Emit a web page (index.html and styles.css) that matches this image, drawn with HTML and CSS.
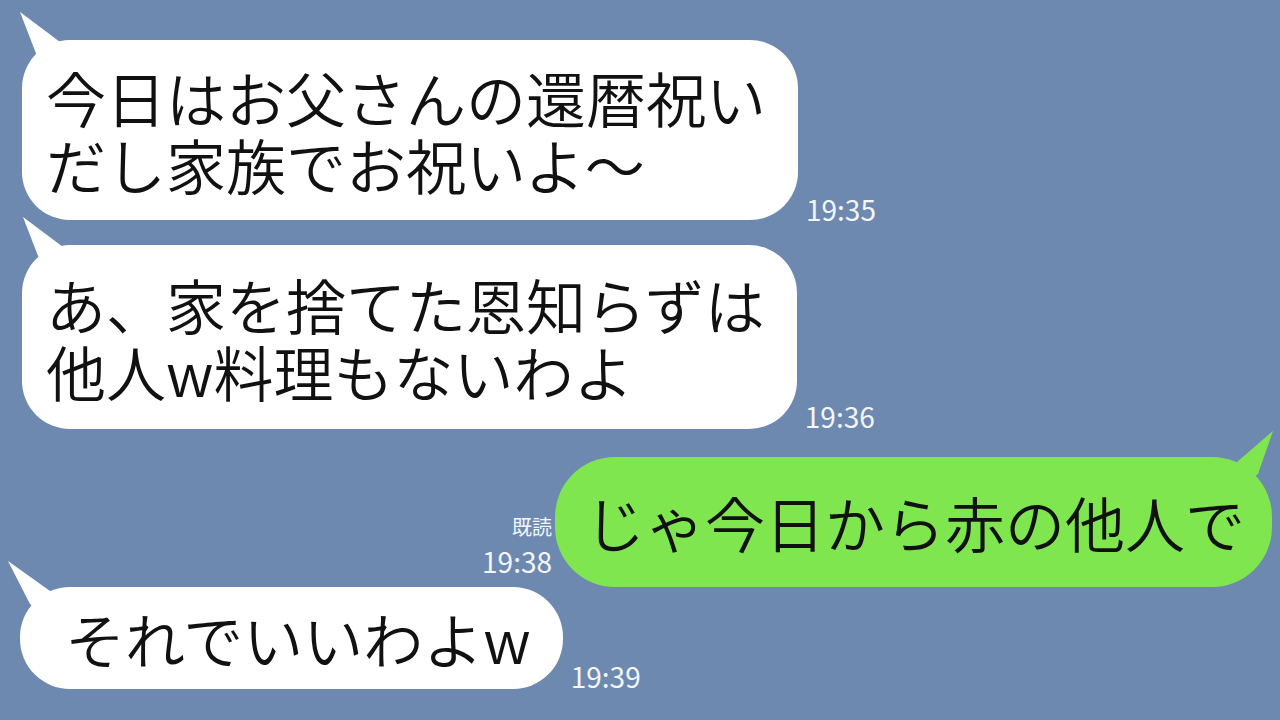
FILE: index.html
```html
<!DOCTYPE html>
<html lang="ja">
<head>
    <meta charset="UTF-8">
    <meta name="viewport" content="width=device-width, initial-scale=1.0">
    <title>トーク</title>
    <link rel="stylesheet" href="styles.css">
</head>
<body>
    <div class="chat">
        <div class="row left first">
            <div class="bubble white">
                <span class="line">今日はお父さんの還暦祝い</span>
                <span class="line">だし家族でお祝いよ〜</span>
            </div>
            <div class="meta"><span class="time">19:35</span></div>
        </div>

        <div class="row left second">
            <div class="bubble white">
                <span class="line">あ、家を捨てた恩知らずは</span>
                <span class="line">他人w料理もないわよ</span>
            </div>
            <div class="meta"><span class="time">19:36</span></div>
        </div>

        <div class="row right third">
            <div class="meta mine">
                <span class="read">既読</span>
                <span class="time">19:38</span>
            </div>
            <div class="bubble green"><span class="line">じゃ今日から赤の他人で</span></div>
        </div>

        <div class="row left fourth">
            <div class="bubble white short"><span class="line">それでいいわよw</span></div>
            <div class="meta"><span class="time">19:39</span></div>
        </div>
    </div>
</body>
</html>
```

FILE: styles.css
```css
body {
    margin: 0;
    background-color: #6e89b0;
    font-family: "Noto Sans CJK JP", "Noto Sans", sans-serif;
    color: #111;
}
.chat {
    width: 1280px;
    height: 720px;
    overflow: hidden;
    display: flex;
    flex-direction: column;
    padding-top: 40px;
    box-sizing: border-box;
}
.row {
    display: flex;
    align-items: flex-end;
    gap: 8px;
}
.row.left {
    padding-left: 22px;
}
.row.right {
    justify-content: flex-end;
    padding-right: 8px;
    gap: 3px;
}
.second {
    margin-top: 25px;
}
.third {
    margin-top: 28px;
}
.fourth {
    margin-top: 0;
}
.row.fourth {
    padding-left: 20px;
}

.bubble {
    position: relative;
    font-size: 60px;
    font-weight: 350;
    line-height: 67px;
    white-space: nowrap;
    border-radius: 48px;
}
.bubble .line {
    display: block;
    height: 67px;
}
.bubble::before {
    content: "";
    position: absolute;
    width: 60px;
    height: 70px;
}
.white {
    background: #fff;
    padding: 23px 32px 23px 24px;
}
.white::before {
    background: #fff;
    left: -4px;
    top: -30px;
    clip-path: polygon(2px 2px, 19px 46px, 40px 60px, 42px 32px);
}
.second .white {
    padding: 25px 32px 25px 24px;
}
.second .white::before {
    left: -1px;
}
.white.short {
    padding: 17px 32px 18px 45px;
    border-radius: 50px;
}
.white.short::before {
    left: -14px;
    top: -28px;
    clip-path: polygon(2px 2px, 24px 45px, 45px 60px, 44px 32px);
}
.green {
    background: #80e64f;
    padding: 31px 27px 32px 30px;
    border-radius: 60px;
}
.green::before {
    background: #80e64f;
    right: -4px;
    top: -28px;
    clip-path: polygon(57px 2px, 42px 45px, 20px 60px, 21px 33px);
}

.meta {
    display: flex;
    flex-direction: column;
    align-items: flex-end;
    color: #f3f6fa;
    margin-bottom: -7px;
}
.first .meta {
    margin-bottom: -9px;
}
.meta.mine {
    margin-bottom: 6px;
}
.time {
    font-size: 28px;
    line-height: 40px;
}
.read {
    font-size: 20px;
    line-height: 29px;
}
```
